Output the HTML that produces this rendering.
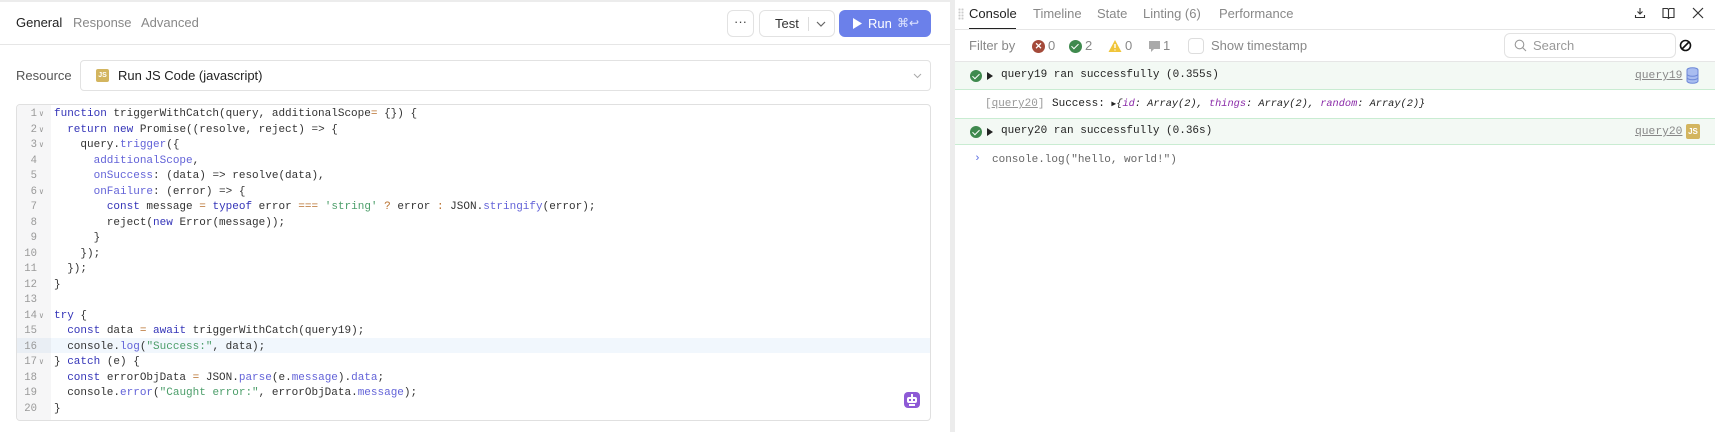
<!DOCTYPE html>
<html><head><meta charset="utf-8"><style>
*{box-sizing:border-box;margin:0;padding:0}
body{width:1715px;height:432px;overflow:hidden;background:#fff;font-family:"Liberation Sans",sans-serif;font-size:13px;color:#222;position:relative}
.abs{position:absolute}
.mono{font-family:"Liberation Mono",monospace}
#left{left:0;top:0;width:950px;height:432px;background:#fff;border-top:2px solid #ececec}
#div{left:950px;top:0;width:5px;height:432px;background:#ececec}
#right{left:955px;top:0;width:760px;height:432px}
.tab{position:absolute;top:13px;font-size:13px;color:#888}
.btn{position:absolute;border:1px solid #e2e2e2;border-radius:6px;background:#fff}
.code{left:16px;top:102px;width:915px;height:317px;border:1px solid #e0e0e0;border-radius:4px;overflow:hidden}
.gut{position:absolute;left:0;top:0;width:34px;height:100%;background:#f6f6f7}
.ln{position:absolute;left:0;width:915px;height:15.5px;line-height:15.5px;font-size:11px;white-space:pre}
.ln .n{position:absolute;left:0;width:20px;text-align:right;color:#999;font-size:10.6px}
.ln .f{position:absolute;left:22px;color:#999;font-size:8px}
.ln .c{position:absolute;left:37px;color:#333}
.k{color:#3434b8}.p{color:#6363d8}.s{color:#4c9e6a}.o{color:#b8702e}
.rt{position:absolute;font-size:13px;color:#888}
.row{position:absolute;left:0;width:760px;font-family:"Liberation Mono",monospace;font-size:11.3px;color:#222;white-space:pre}
.ok{position:absolute;width:12px;height:12px;border-radius:50%;background:#3f8a4e}
.ok:after{content:"";position:absolute;left:3.5px;top:2px;width:3px;height:6px;border:solid #fff;border-width:0 1.6px 1.6px 0;transform:rotate(45deg)}
.tri{position:absolute;width:0;height:0;border-left:6px solid #222;border-top:4px solid transparent;border-bottom:4px solid transparent}
.lnk{position:absolute;color:#888;text-decoration:underline;font-family:"Liberation Mono",monospace;font-size:11.3px}
</style></head><body>

<div id="left" class="abs">
  <div class="tab" style="left:16px;top:13px;color:#222">General</div>
  <div class="tab" style="left:73px">Response</div>
  <div class="tab" style="left:141px">Advanced</div>
  <div class="btn" style="left:727px;top:8px;width:27px;height:27px;text-align:center;line-height:22px;color:#444">···</div>
  <div class="btn" style="left:759px;top:8px;width:76px;height:27px">
    <span class="abs" style="left:15px;top:5px;color:#333">Test</span>
    <span class="abs" style="left:48px;top:6px;width:1px;height:14px;background:#ddd"></span>
    <svg class="abs" style="left:56px;top:9px" width="10" height="8" viewBox="0 0 10 8"><path d="M1 2l4 4 4-4" fill="none" stroke="#666" stroke-width="1.2"/></svg>
  </div>
  <div class="abs" style="left:839px;top:8px;width:92px;height:27px;background:#6b80ea;border-radius:6px;color:#fff">
    <svg class="abs" style="left:13px;top:8px" width="10" height="11"><path d="M1 0L10 5.5 1 11z" fill="#fff"/></svg>
    <span class="abs" style="left:29px;top:6px;font-size:13px">Run</span>
    <span class="abs" style="left:58px;top:6px;font-size:12px;color:#dfe5ff">⌘↩</span>
  </div>
  <div class="abs" style="left:0;top:42px;width:950px;height:1px;background:#e6e6e6"></div>
  <div class="abs" style="left:16px;top:66px;color:#555;font-size:13px">Resource</div>
  <div class="abs" style="left:80px;top:58px;width:851px;height:31px;border:1px solid #e2e2e2;border-radius:4px">
    <span class="abs" style="left:15px;top:8px;width:13px;height:13px;background:#d3b55f;border-radius:2px;color:#fff;font-size:7px;font-weight:bold;text-align:center;line-height:13px">JS</span>
    <span class="abs" style="left:37px;top:7px;color:#222">Run JS Code (javascript)</span>
    <svg class="abs" style="left:832px;top:12px" width="9" height="6"><path d="M1 1l3.5 3.5L8 1" fill="none" stroke="#aaa" stroke-width="1"/></svg>
  </div>
  <div class="abs code mono">
    <div class="gut"></div>
    <div class="abs" style="left:0;top:232.5px;width:915px;height:15.5px;background:#f1f7fd"></div>
    <div class="abs" style="left:0;top:232.5px;width:34px;height:15.5px;background:#e9eef4"></div>
    <div style="position:absolute;left:0;top:2px">
<div class="ln" style="top:0"><span class="n">1</span><span class="f">∨</span><span class="c"><span class="k">function</span> triggerWithCatch(query, additionalScope<span class="o">=</span> {}) {</span></div>
<div class="ln" style="top:15.5px"><span class="n">2</span><span class="f">∨</span><span class="c">  <span class="k">return</span> <span class="k">new</span> Promise((resolve, reject) =&gt; {</span></div>
<div class="ln" style="top:31px"><span class="n">3</span><span class="f">∨</span><span class="c">    query.<span class="p">trigger</span>({</span></div>
<div class="ln" style="top:46.5px"><span class="n">4</span><span class="c">      <span class="p">additionalScope</span>,</span></div>
<div class="ln" style="top:62px"><span class="n">5</span><span class="c">      <span class="p">onSuccess</span>: (data) =&gt; resolve(data),</span></div>
<div class="ln" style="top:77.5px"><span class="n">6</span><span class="f">∨</span><span class="c">      <span class="p">onFailure</span>: (error) =&gt; {</span></div>
<div class="ln" style="top:93px"><span class="n">7</span><span class="c">        <span class="k">const</span> message <span class="o">=</span> <span class="k">typeof</span> error <span class="o">===</span> <span class="s">'string'</span> <span class="o">?</span> error <span class="o">:</span> JSON.<span class="p">stringify</span>(error);</span></div>
<div class="ln" style="top:108.5px"><span class="n">8</span><span class="c">        reject(<span class="k">new</span> Error(message));</span></div>
<div class="ln" style="top:124px"><span class="n">9</span><span class="c">      }</span></div>
<div class="ln" style="top:139.5px"><span class="n">10</span><span class="c">    });</span></div>
<div class="ln" style="top:155px"><span class="n">11</span><span class="c">  });</span></div>
<div class="ln" style="top:170.5px"><span class="n">12</span><span class="c">}</span></div>
<div class="ln" style="top:186px"><span class="n">13</span></div>
<div class="ln" style="top:201.5px"><span class="n">14</span><span class="f">∨</span><span class="c"><span class="k">try</span> {</span></div>
<div class="ln" style="top:217px"><span class="n">15</span><span class="c">  <span class="k">const</span> data <span class="o">=</span> <span class="k">await</span> triggerWithCatch(query19);</span></div>
<div class="ln" style="top:232.5px"><span class="n">16</span><span class="c">  console.<span class="p">log</span>(<span class="s">"Success:"</span>, data);</span></div>
<div class="ln" style="top:248px"><span class="n">17</span><span class="f">∨</span><span class="c">} <span class="k">catch</span> (e) {</span></div>
<div class="ln" style="top:263.5px"><span class="n">18</span><span class="c">  <span class="k">const</span> errorObjData <span class="o">=</span> JSON.<span class="p">parse</span>(e.<span class="p">message</span>).<span class="p">data</span>;</span></div>
<div class="ln" style="top:279px"><span class="n">19</span><span class="c">  console.<span class="p">error</span>(<span class="s">"Caught error:"</span>, errorObjData.<span class="p">message</span>);</span></div>
<div class="ln" style="top:294.5px"><span class="n">20</span><span class="c">}</span></div>
    </div>
    <div class="abs" style="left:887px;top:287px;width:16px;height:16px;background:#8e5ad6;border-radius:4px">
      <span class="abs" style="left:7px;top:2px;width:2px;height:3px;background:#fff"></span>
      <span class="abs" style="left:3px;top:5px;width:10px;height:6px;background:#fff;border-radius:2px"></span>
      <span class="abs" style="left:5px;top:7px;width:2px;height:2px;background:#8e5ad6"></span>
      <span class="abs" style="left:9px;top:7px;width:2px;height:2px;background:#8e5ad6"></span>
      <span class="abs" style="left:5px;top:12px;width:6px;height:2px;background:#fff"></span>
    </div>
  </div>
</div>

<div id="div" class="abs"></div>

<div id="right" class="abs">
  <div class="abs" style="left:3px;top:8px;width:6px;height:12px;background-image:radial-gradient(#ccc 1px,transparent 1.2px);background-size:3px 3px"></div>
  <div class="rt" style="left:14px;top:6px;color:#222">Console</div>
  <div class="abs" style="left:14px;top:28px;width:47px;height:2px;background:#222"></div>
  <div class="rt" style="left:78px;top:6px">Timeline</div>
  <div class="rt" style="left:142px;top:6px">State</div>
  <div class="rt" style="left:188px;top:6px">Linting (6)</div>
  <div class="rt" style="left:264px;top:6px">Performance</div>
  <svg class="abs" style="left:679px;top:7px" width="12" height="12" viewBox="0 0 12 12"><path d="M6 1v6M3.5 4.5L6 7l2.5-2.5M1.5 8v2.5h9V8" fill="none" stroke="#333" stroke-width="1.1"/></svg>
  <svg class="abs" style="left:707px;top:7px" width="13" height="12" viewBox="0 0 13 12"><path d="M1 1.5h4.5l1 1 1-1H12v9H7.5l-1 1-1-1H1zM6.5 2.5v8" fill="none" stroke="#333" stroke-width="1.1"/></svg>
  <svg class="abs" style="left:737px;top:7px" width="12" height="12"><path d="M1 1l10 10M11 1L1 11" stroke="#333" stroke-width="1.2"/></svg>
  <div class="abs" style="left:0;top:29px;width:760px;height:1px;background:#e6e6e6"></div>

  <div class="rt" style="left:14px;top:38px">Filter by</div>
  <div class="abs" style="left:77px;top:40px;width:13px;height:13px;border-radius:50%;background:#a44a3a;color:#fff;font-size:9px;font-weight:bold;text-align:center;line-height:13px">✕</div>
  <div class="rt" style="left:93px;top:38px">0</div>
  <div class="ok" style="left:114px;top:40px;width:13px;height:13px"></div>
  <div class="rt" style="left:130px;top:38px">2</div>
  <svg class="abs" style="left:153px;top:39px" width="14" height="14"><path d="M7 1L13.5 13H.5z" fill="#f0c53a"/><path d="M7 5v4M7 10.5v1" stroke="#fff" stroke-width="1.4"/></svg>
  <div class="rt" style="left:170px;top:38px">0</div>
  <svg class="abs" style="left:193px;top:40px" width="13" height="14"><path d="M1 1h11v8H6l-3 3V9H1z" fill="#aaa"/></svg>
  <div class="rt" style="left:208px;top:38px">1</div>
  <div class="abs" style="left:233px;top:38px;width:16px;height:16px;border:1px solid #ddd;border-radius:4px"></div>
  <div class="rt" style="left:256px;top:38px">Show timestamp</div>
  <div class="abs" style="left:549px;top:33px;width:172px;height:25px;border:1px solid #e2e2e2;border-radius:6px">
    <svg class="abs" style="left:9px;top:5px" width="13" height="13"><circle cx="5.5" cy="5.5" r="4.3" fill="none" stroke="#999" stroke-width="1.1"/><path d="M8.7 8.7L12 12" stroke="#999" stroke-width="1.1"/></svg>
    <span class="abs" style="left:28px;top:4px;color:#999;font-size:13px">Search</span>
  </div>
  <svg class="abs" style="left:724px;top:39px" width="13" height="13"><circle cx="6.5" cy="6.5" r="5" fill="none" stroke="#111" stroke-width="1.6"/><path d="M3 10L10 3" stroke="#111" stroke-width="1.6"/></svg>
  <div class="abs" style="left:0;top:61px;width:760px;height:1px;background:#e6e6e6"></div>

  <div class="row" style="top:62px;height:28px;background:#f3f9f4;border-bottom:1px solid #c9ecd2"></div>
  <div class="ok" style="left:15px;top:70px"></div>
  <div class="tri" style="left:32px;top:72px"></div>
  <div class="row" style="top:69px;left:46px;width:auto;font-size:11px">query19 ran successfully (0.355s)</div>
  <div class="lnk" style="left:680px;top:70px">query19</div>
  <svg class="abs" style="left:731px;top:67px" width="13" height="17"><ellipse cx="6.5" cy="3" rx="5.5" ry="2.3" fill="#a9bdf0" stroke="#6d88d8"/><path d="M1 3v11c0 1.3 2.5 2.3 5.5 2.3S12 15.3 12 14V3" fill="#a9bdf0" stroke="#6d88d8"/><path d="M1 7c0 1.3 2.5 2.3 5.5 2.3S12 8.3 12 7M1 10.5c0 1.3 2.5 2.3 5.5 2.3s5.5-1 5.5-2.3" fill="none" stroke="#6d88d8"/></svg>

  <div class="row" style="top:98px;left:30px;width:auto;color:#999;font-size:11px">[<span style="text-decoration:underline">query20</span>]</div>
  <div class="row" style="top:98px;left:97px;width:auto;font-size:11px">Success: <span style="font-size:8px">▶</span><i style="font-size:10.3px">{<span style="color:#8a2aa8">id</span>: Array(2), <span style="color:#8a2aa8">things</span>: Array(2), <span style="color:#8a2aa8">random</span>: Array(2)}</i></div>

  <div class="row" style="top:118px;height:27px;background:#f3f9f4;border-top:1px solid #c9ecd2;border-bottom:1px solid #c9ecd2"></div>
  <div class="ok" style="left:15px;top:126px"></div>
  <div class="tri" style="left:32px;top:128px"></div>
  <div class="row" style="top:125px;left:46px;width:auto;font-size:11px">query20 ran successfully (0.36s)</div>
  <div class="lnk" style="left:680px;top:126px">query20</div>
  <div class="abs" style="left:731px;top:124px;width:14px;height:15px;background:#d3b55f;border-radius:2px;color:#fff;font-size:8px;font-weight:bold;text-align:center;line-height:15px">JS</div>

  <div class="row" style="top:153px;left:19px;width:auto;color:#5b6ee0">›</div>
  <div class="row" style="top:154px;left:37px;width:auto;color:#666;font-size:11px">console.log("hello, world!")</div>
</div>
</body></html>
